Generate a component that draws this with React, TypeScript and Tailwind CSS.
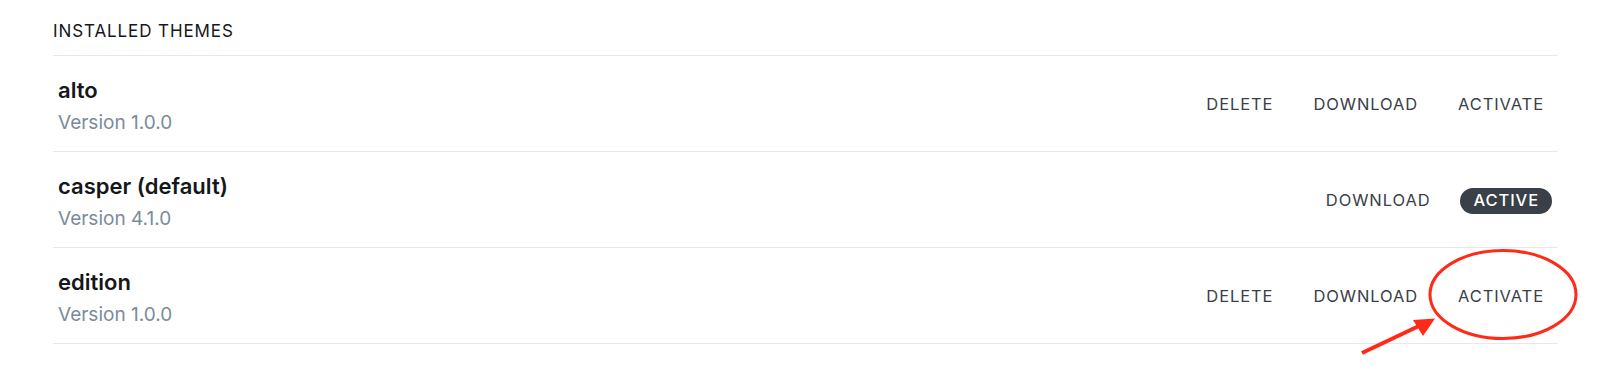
import React from 'react';

interface Theme {
  name: string;
  version: string;
  deletable: boolean;
  active: boolean;
}

const themes: Theme[] = [
  { name: 'alto', version: '1.0.0', deletable: true, active: false },
  { name: 'casper (default)', version: '4.1.0', deletable: false, active: true },
  { name: 'edition', version: '1.0.0', deletable: true, active: false },
];

function ThemeRow({ theme }: { theme: Theme }) {
  return (
    <div className="h-[96px] border-b border-[#e6e9eb] flex items-center justify-between pl-[5px]">
      <div className="mt-[4px]">
        <h3 className="text-[22px] leading-[28px] font-semibold text-[#15171a]">{theme.name}</h3>
        <p className="text-[19px] leading-[26px] mt-[6px] text-[#7c8b9a]">Version {theme.version}</p>
      </div>
      <div className="flex items-center mt-[2px] text-[16.5px] tracking-[0.9px] text-[#394047]">
        {theme.deletable && <button className="px-[14px] py-1">DELETE</button>}
        <button className="px-[14px] py-1 ml-[12px]">DOWNLOAD</button>
        {theme.active ? (
          <span className="ml-[16px] mr-[6px] px-[13px] h-[26px] flex items-center rounded-full bg-[#394047] text-white font-medium">
            ACTIVE
          </span>
        ) : (
          <button className="px-[14px] py-1 ml-[12px]">ACTIVATE</button>
        )}
      </div>
    </div>
  );
}

export default function App() {
  return (
    <div className="w-[1600px] h-[367px] bg-white relative overflow-hidden font-['Inter',sans-serif]">
      <div className="ml-[53px] w-[1505px]">
        <div className="h-[56px] border-b border-[#e6e9eb] pt-[20px]">
          <h4 className="text-[17px] leading-[22px] tracking-[0.9px] text-[#15171a]">INSTALLED THEMES</h4>
        </div>
        {themes.map((t) => (
          <ThemeRow key={t.name} theme={t} />
        ))}
      </div>

      {/* red annotation over the last ACTIVATE */}
      <svg className="absolute left-0 top-0 pointer-events-none" width="1600" height="367">
        <ellipse cx="1503" cy="294.5" rx="73" ry="44" fill="none" stroke="#ff2a17" strokeWidth="3" />
        <line x1="1362" y1="353" x2="1420" y2="325.5" stroke="#ff2a17" strokeWidth="4" strokeLinecap="butt" />
        <polygon points="1435,318.5 1413,320 1423,336" fill="#ff2a17" />
      </svg>
    </div>
  );
}
